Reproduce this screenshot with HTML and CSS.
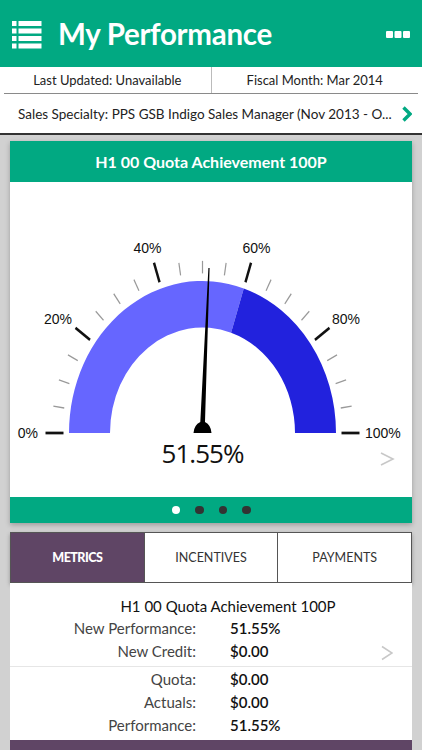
FILE: index.html
```html
<!DOCTYPE html>
<html>
<head>
<meta charset="utf-8">
<link rel="stylesheet" href="styles.css">
</head>
<body>
<div class="app">
  <header class="topbar">
    <svg class="menu-icon" width="30" height="28" viewBox="0 0 30 28">
      <rect x="0" y="0" width="4.5" height="5" fill="#fff"/>
      <rect x="6.5" y="0" width="23" height="5" fill="#fff"/>
      <rect x="0" y="7.5" width="4.5" height="5" fill="#fff"/>
      <rect x="6.5" y="7.5" width="23" height="5" fill="#fff"/>
      <rect x="0" y="15" width="4.5" height="5" fill="#fff"/>
      <rect x="6.5" y="15" width="23" height="5" fill="#fff"/>
      <rect x="0" y="22.5" width="4.5" height="5" fill="#fff"/>
      <rect x="6.5" y="22.5" width="23" height="5" fill="#fff"/>
    </svg>
    <h1 class="title">My Performance</h1>
    <svg class="more-icon" width="24" height="8" viewBox="0 0 24 8">
      <rect x="0" y="0" width="7" height="7" rx="1" fill="#fff"/>
      <rect x="8.5" y="0" width="7" height="7" rx="1" fill="#fff"/>
      <rect x="17" y="0" width="7" height="7" rx="1" fill="#fff"/>
    </svg>
  </header>

  <section class="info">
    <div class="info-row">
      <div class="info-cell">Last Updated: Unavailable</div>
      <div class="info-cell">Fiscal Month: Mar 2014</div>
    </div>
    <div class="specialty">
      <span class="specialty-text">Sales Specialty: PPS GSB Indigo Sales Manager (Nov 2013 - O...</span>
      <svg class="chev-green" width="10" height="16" viewBox="0 0 10 16">
        <path d="M1.5 1.5 L8 8 L1.5 14.5" fill="none" stroke="#01a982" stroke-width="3.4"/>
      </svg>
    </div>
  </section>

  <section class="card">
    <div class="card-head">H1 00 Quota Achievement 100P</div>
    <div class="gauge">
      <svg width="402" height="315" viewBox="0 0 402 315">
        <path d="M59 251 A133.5 152 0 0 1 233.75 106.44 L221.08 150.66 A92.5 105.5 0 0 0 100 251 Z" fill="#6666ff"/>
        <path d="M233.75 106.44 A133.5 152 0 0 1 326 251 L285 251 A92.5 105.5 0 0 0 221.08 150.66 Z" fill="#2222dd"/>
        <g transform="translate(192.5 251) scale(1 1.14)">
          <g stroke="#999" stroke-width="1.2">
            <line x1="-140" y1="0" x2="-151" y2="0" transform="rotate(9)"/>
            <line x1="-140" y1="0" x2="-151" y2="0" transform="rotate(18)"/>
            <line x1="-140" y1="0" x2="-151" y2="0" transform="rotate(27)"/>
            <line x1="-140" y1="0" x2="-151" y2="0" transform="rotate(45)"/>
            <line x1="-140" y1="0" x2="-151" y2="0" transform="rotate(54)"/>
            <line x1="-140" y1="0" x2="-151" y2="0" transform="rotate(63)"/>
            <line x1="-140" y1="0" x2="-151" y2="0" transform="rotate(81)"/>
            <line x1="-140" y1="0" x2="-151" y2="0" transform="rotate(90)"/>
            <line x1="-140" y1="0" x2="-151" y2="0" transform="rotate(99)"/>
            <line x1="-140" y1="0" x2="-151" y2="0" transform="rotate(117)"/>
            <line x1="-140" y1="0" x2="-151" y2="0" transform="rotate(126)"/>
            <line x1="-140" y1="0" x2="-151" y2="0" transform="rotate(135)"/>
            <line x1="-140" y1="0" x2="-151" y2="0" transform="rotate(153)"/>
            <line x1="-140" y1="0" x2="-151" y2="0" transform="rotate(162)"/>
            <line x1="-140" y1="0" x2="-151" y2="0" transform="rotate(171)"/>
          </g>
          <g stroke="#111" stroke-width="2.4">
            <line x1="-139" y1="0" x2="-157" y2="0"/>
            <line x1="-139" y1="0" x2="-157" y2="0" transform="rotate(36)"/>
            <line x1="-139" y1="0" x2="-157" y2="0" transform="rotate(72)"/>
            <line x1="-139" y1="0" x2="-157" y2="0" transform="rotate(108)"/>
            <line x1="-139" y1="0" x2="-157" y2="0" transform="rotate(144)"/>
            <line x1="-139" y1="0" x2="-157" y2="0" transform="rotate(180)"/>
          </g>
        </g>
        <g class="tick-label">
          <text x="28" y="256" text-anchor="end">0%</text>
          <text x="62" y="142" text-anchor="end">20%</text>
          <text x="137.5" y="71" text-anchor="middle">40%</text>
          <text x="246.5" y="71" text-anchor="middle">60%</text>
          <text x="322" y="142">80%</text>
          <text x="355" y="256">100%</text>
        </g>
        <path d="M183.5 251 Q184 243 190.3 240 L198.4 86 L199.6 86 L195 240 Q201 243 201.5 251 Z" fill="#000"/>
        <text class="gauge-value" x="192.5" y="281" text-anchor="middle">51.55%</text>
        <polyline points="371,271 383,277 371,283" fill="none" stroke="#c8c8c8" stroke-width="1.6"/>
      </svg>
    </div>
    <div class="card-foot">
      <span class="dot active"></span>
      <span class="dot"></span>
      <span class="dot"></span>
      <span class="dot"></span>
    </div>
  </section>

  <nav class="tabs">
    <div class="tab active">METRICS</div>
    <div class="tab">INCENTIVES</div>
    <div class="tab">PAYMENTS</div>
  </nav>

  <section class="metrics">
    <div class="metrics-title">H1 00 Quota Achievement 100P</div>
    <div class="metric-group">
      <div class="metric-row"><span class="m-label">New Performance:</span><span class="m-value">51.55%</span></div>
      <div class="metric-row"><span class="m-label">New Credit:</span><span class="m-value">$0.00</span></div>
      <svg class="chev-gray" width="12" height="16" viewBox="0 0 12 16">
        <polyline points="1,1.5 11,8 1,14.5" fill="none" stroke="#c8c8c8" stroke-width="1.5"/>
      </svg>
    </div>
    <div class="metric-group second">
      <div class="metric-row"><span class="m-label">Quota:</span><span class="m-value">$0.00</span></div>
      <div class="metric-row"><span class="m-label">Actuals:</span><span class="m-value">$0.00</span></div>
      <div class="metric-row"><span class="m-label">Performance:</span><span class="m-value">51.55%</span></div>
    </div>
  </section>
  <div class="bottom-bar"></div>
</div>
</body>
</html>
```

FILE: styles.css
```css
* { box-sizing: border-box; }
html, body { margin: 0; padding: 0; }
body {
  width: 422px;
  height: 750px;
  overflow: hidden;
  background: #d1d1d1;
  font-family: Lato, "Open Sans", sans-serif;
}
.app { width: 422px; height: 750px; display: flex; flex-direction: column; }

.topbar {
  height: 67px;
  background: #01a982;
  display: flex;
  align-items: center;
  padding: 0 12px;
  flex-shrink: 0;
}
.menu-icon { display: block; margin-top: 2px; }
.title {
  margin: 0 0 0 16px;
  color: #fff;
  font-family: Lato, sans-serif;
  font-weight: 700;
  font-size: 29.5px;
  letter-spacing: -0.3px;
  flex: 1;
}
.more-icon { display: block; margin-top: 2px; }

.info {
  background: #fff;
  border-bottom: 2px solid #333;
  flex-shrink: 0;
}
.info-row {
  height: 27px;
  display: flex;
  margin: 0 4px;
  border-bottom: 1px solid #8a8a8a;
}
.info-cell {
  flex: 1;
  display: flex;
  align-items: center;
  justify-content: center;
  font-size: 13px;
  color: #222;
}
.info-cell + .info-cell { border-left: 1px solid #bbb; }
.specialty {
  height: 39px;
  display: flex;
  align-items: center;
  padding: 0 10px 0 18px;
}
.specialty-text {
  flex: 1;
  font-size: 13.5px;
  color: #222;
  white-space: nowrap;
}
.chev-green { display: block; }

.card {
  margin: 6px 10px 0;
  background: #fff;
  box-shadow: 0 2px 5px rgba(0,0,0,0.25);
  flex-shrink: 0;
}
.card-head {
  height: 41px;
  background: #01a982;
  color: #fff;
  font-weight: 700;
  font-size: 16px;
  display: flex;
  align-items: center;
  justify-content: center;
}
.gauge { height: 315px; }
.gauge svg { display: block; }
.tick-label text {
  font-family: "Liberation Sans", Arial, sans-serif;
  font-size: 14px;
  fill: #111;
}
.gauge-value {
  font-family: "Open Sans", sans-serif;
  font-size: 26px;
  fill: #111;
  letter-spacing: -1px;
}
.card-foot {
  height: 26px;
  background: #01a982;
  display: flex;
  align-items: center;
  justify-content: center;
  gap: 15px;
}
.dot {
  width: 8.5px;
  height: 8.5px;
  border-radius: 50%;
  background: #333;
}
.dot.active { background: #fff; }

.tabs {
  margin: 9px 10px 0;
  height: 51px;
  display: flex;
  border: 1px solid #555;
  background: #fff;
  box-shadow: 0 2px 4px rgba(0,0,0,0.3);
  flex-shrink: 0;
}
.tab {
  flex: 1;
  display: flex;
  align-items: center;
  justify-content: center;
  font-size: 12.5px;
  color: #333;
}
.tab + .tab { border-left: 1px solid #555; }
.tab.active {
  background: #5f4565;
  color: #fff;
  font-weight: 900;
  letter-spacing: -0.5px;
}

.metrics {
  margin: 0 10px;
  background: #fff;
  flex: 1;
  padding-top: 13px;
}
.metrics-title {
  text-align: center;
  padding-left: 34px;
  font-size: 15px;
  color: #111;
  height: 20px;
  line-height: 20px;
}
.metric-group {
  position: relative;
  padding: 0 0 4px;
}
.metric-group.second {
  border-top: 1px solid #e6e6e6;
  padding-top: 0;
}
.metric-row {
  display: grid;
  grid-template-columns: 186px 1fr;
  column-gap: 34px;
  height: 23px;
  align-items: center;
  font-size: 15px;
}
.m-label { text-align: right; color: #444; }
.m-value { color: #111; font-weight: 600; }
.chev-gray { position: absolute; right: 19px; top: 29px; }

.bottom-bar {
  margin: 0 10px;
  height: 10px;
  background: #5f4565;
  flex-shrink: 0;
}
```
